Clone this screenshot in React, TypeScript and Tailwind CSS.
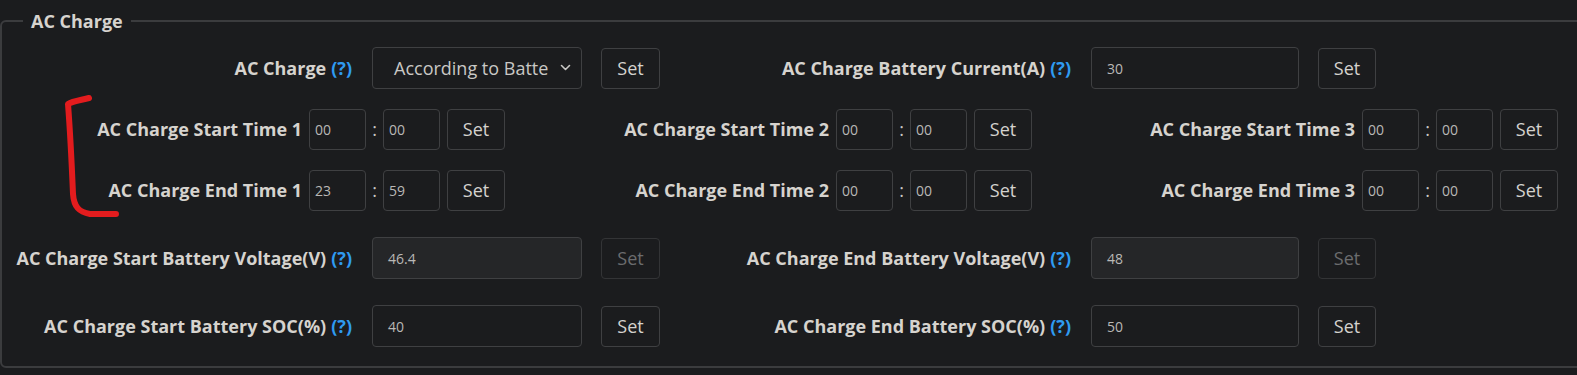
import React from "react";

const font = "font-['Open_Sans','Noto_Sans',sans-serif]";

function Help() {
  return <span className="ml-[5px] text-[#2f9bf0]">(?)</span>;
}

function SetButton({ disabled, width }: { disabled?: boolean; width: string }) {
  return (
    <button
      type="button"
      disabled={disabled}
      className={`${width} h-[41px] shrink-0 rounded-[4px] border text-[18px] ${
        disabled ? "border-[#333436] text-[#6b6c6e]" : "border-[#3f4042] text-[#d4d2ce]"
      }`}
    >
      Set
    </button>
  );
}

function TextBox({ value, width, disabled }: { value: string; width: string; disabled?: boolean }) {
  return (
    <div
      className={`${width} h-[42px] shrink-0 flex items-center rounded-[4px] border border-[#3f4042] pl-[15px] text-[14px] text-[#b9b8b6] ${
        disabled ? "bg-[#252628]" : "bg-[#1b1c1e]"
      }`}
    >
      {value}
    </div>
  );
}

function TimeBox({ value, width }: { value: string; width: string }) {
  return (
    <div className={`${width} h-[41px] shrink-0 flex items-center rounded-[4px] border border-[#3f4042] pl-[5px] text-[14px] text-[#b9b8b6]`}>
      {value}
    </div>
  );
}

function TimeGroup({ label, labelWidth, h, m }: { label: string; labelWidth: string; h: string; m: string }) {
  return (
    <div className="flex items-center">
      <div className={`${labelWidth} shrink-0 whitespace-nowrap text-right font-bold text-[18px] text-[#d6d3ce]`}>{label}</div>
      <div className="ml-[7px]">
        <TimeBox value={h} width="w-[57px]" />
      </div>
      <div className="w-[17px] text-center text-[18px] text-[#c9c8c5]">:</div>
      <TimeBox value={m} width="w-[57px]" />
      <div className="ml-[7px]">
        <SetButton width="w-[58px]" />
      </div>
    </div>
  );
}

export default function App() {
  return (
    <div className={`relative h-[375px] w-full overflow-hidden bg-[#1b1c1e] ${font}`}>
      <fieldset className="mt-[9px] w-[1600px] rounded-[6px] border-2 border-[#3b3c3e] pb-[19px]">
        <legend className="ml-[21px] px-2 text-[18px] font-bold leading-[24px] text-[#d6d3ce]">AC Charge</legend>

        {/* Row 1 */}
        <div className="mt-[14px] flex h-[42px] items-center">
          <div className="w-[350px] shrink-0 whitespace-nowrap text-right text-[18px] font-bold text-[#d6d3ce]">
            AC Charge<Help />
          </div>
          <div className="ml-[20px] relative flex h-[42px] w-[210px] shrink-0 items-center rounded-[4px] border border-[#3f4042] pl-[21px]">
            <span className="whitespace-nowrap text-[18px] text-[#c9c8c5]">According to Batte</span>
            <svg className="absolute right-[10px] top-[16px]" width="11" height="8" viewBox="0 0 11 8" fill="none">
              <path d="M1.5 1.5l4 4 4-4" stroke="#c9c8c5" strokeWidth="1.6" strokeLinecap="round" strokeLinejoin="round" />
            </svg>
          </div>
          <div className="ml-[19px]">
            <SetButton width="w-[59px]" />
          </div>
          <div className="w-[411px] shrink-0 whitespace-nowrap text-right text-[18px] font-bold text-[#d6d3ce]">
            AC Charge Battery Current(A)<Help />
          </div>
          <div className="ml-[20px]">
            <TextBox value="30" width="w-[208px]" />
          </div>
          <div className="ml-[19px]">
            <SetButton width="w-[58px]" />
          </div>
        </div>

        {/* Row 2: start times */}
        <div className="mt-[20px] flex h-[41px] items-center">
          <TimeGroup label="AC Charge Start Time 1" labelWidth="w-[300px]" h="00" m="00" />
          <TimeGroup label="AC Charge Start Time 2" labelWidth="w-[324px]" h="00" m="00" />
          <TimeGroup label="AC Charge Start Time 3" labelWidth="w-[323px]" h="00" m="00" />
        </div>

        {/* Row 3: end times */}
        <div className="mt-[20px] flex h-[41px] items-center">
          <TimeGroup label="AC Charge End Time 1" labelWidth="w-[300px]" h="23" m="59" />
          <TimeGroup label="AC Charge End Time 2" labelWidth="w-[324px]" h="00" m="00" />
          <TimeGroup label="AC Charge End Time 3" labelWidth="w-[323px]" h="00" m="00" />
        </div>

        {/* Row 4: voltage */}
        <div className="mt-[26px] flex h-[42px] items-center">
          <div className="w-[350px] shrink-0 whitespace-nowrap text-right text-[18px] font-bold text-[#d6d3ce]">
            AC Charge Start Battery Voltage(V)<Help />
          </div>
          <div className="ml-[20px]">
            <TextBox value="46.4" width="w-[210px]" disabled />
          </div>
          <div className="ml-[19px]">
            <SetButton width="w-[59px]" disabled />
          </div>
          <div className="w-[411px] shrink-0 whitespace-nowrap text-right text-[18px] font-bold text-[#d6d3ce]">
            AC Charge End Battery Voltage(V)<Help />
          </div>
          <div className="ml-[20px]">
            <TextBox value="48" width="w-[208px]" disabled />
          </div>
          <div className="ml-[19px]">
            <SetButton width="w-[58px]" disabled />
          </div>
        </div>

        {/* Row 5: SOC */}
        <div className="mt-[26px] flex h-[42px] items-center">
          <div className="w-[350px] shrink-0 whitespace-nowrap text-right text-[18px] font-bold text-[#d6d3ce]">
            AC Charge Start Battery SOC(%)<Help />
          </div>
          <div className="ml-[20px]">
            <TextBox value="40" width="w-[210px]" />
          </div>
          <div className="ml-[19px]">
            <SetButton width="w-[59px]" />
          </div>
          <div className="w-[411px] shrink-0 whitespace-nowrap text-right text-[18px] font-bold text-[#d6d3ce]">
            AC Charge End Battery SOC(%)<Help />
          </div>
          <div className="ml-[20px]">
            <TextBox value="50" width="w-[208px]" />
          </div>
          <div className="ml-[19px]">
            <SetButton width="w-[58px]" />
          </div>
        </div>
      </fieldset>

      {/* hand-drawn red bracket annotation */}
      <svg className="pointer-events-none absolute left-0 top-0" width="140" height="230" viewBox="0 0 140 230" fill="none">
        <path
          d="M89 98 C82 100, 73 101, 68 104 C70 130, 72 170, 73 194 C74 207, 79 212, 90 214 L116 214"
          stroke="#e31c1e"
          strokeWidth="6"
          strokeLinecap="round"
          strokeLinejoin="round"
        />
      </svg>
    </div>
  );
}
